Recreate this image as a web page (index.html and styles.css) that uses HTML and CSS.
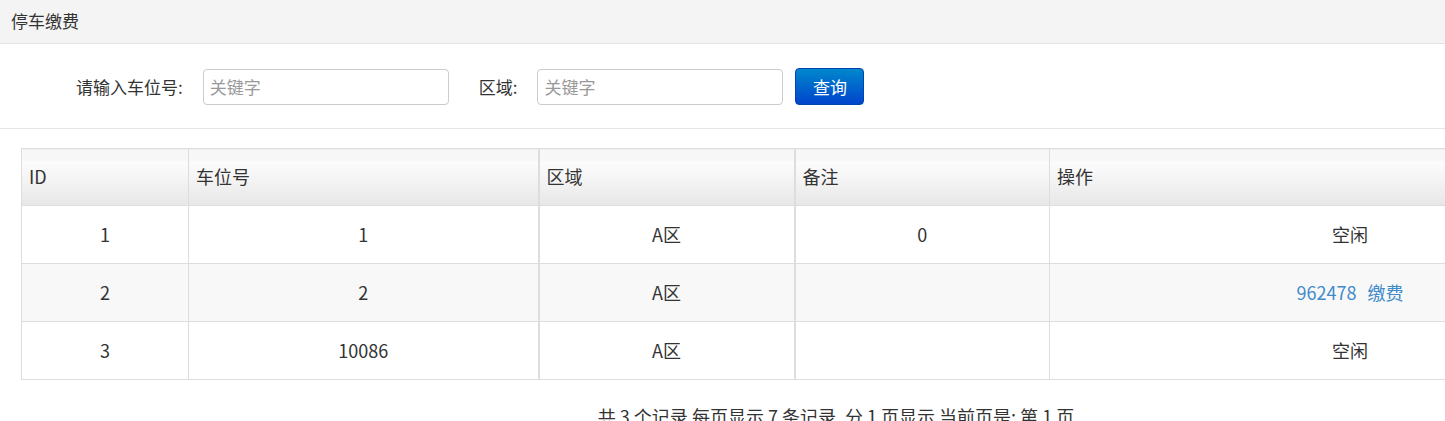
FILE: index.html
```html
<!DOCTYPE html>
<html lang="zh-CN">
<head>
  <meta charset="UTF-8">
  <title>停车缴费</title>
  <link rel="stylesheet" href="styles.css">
</head>
<body>

<div class="title-bar">停车缴费</div>

<!-- Search -->
<form class="search" onsubmit="return false">
  <label class="search-label" for="spot">请输入车位号:</label>
  <input class="search-input" type="text" id="spot" placeholder="关键字">
  <label class="search-label area-label" for="area">区域:</label>
  <input class="search-input" type="text" id="area" placeholder="关键字">
  <button class="btn-query" type="submit">查询</button>
</form>

<div class="page">
  <div class="list">
    <table class="grid">
      <thead>
        <tr>
          <th class="col-id">ID</th>
          <th class="col-no">车位号</th>
          <th class="col-area sep">区域</th>
          <th class="col-note sep">备注</th>
          <th class="col-op">操作</th>
        </tr>
      </thead>
      <tbody>
        <tr>
          <td>1</td>
          <td>1</td>
          <td class="sep">A区</td>
          <td class="sep">0</td>
          <td>空闲</td>
        </tr>
        <tr class="odd">
          <td>2</td>
          <td>2</td>
          <td class="sep">A区</td>
          <td class="sep"></td>
          <td><a href="#">962478</a><a class="pay" href="#">缴费</a></td>
        </tr>
        <tr>
          <td>3</td>
          <td>10086</td>
          <td class="sep">A区</td>
          <td class="sep"></td>
          <td>空闲</td>
        </tr>
      </tbody>
    </table>

    <div class="pager">共 3 个记录 每页显示 7 条记录, 分 1 页显示 当前页是: 第 1 页</div>
  </div>
</div>

</body>
</html>
```

FILE: styles.css
```css
* {
  box-sizing: border-box;
}

html, body {
  overflow: hidden;
}

body {
  margin: 0;
  background: #fff;
  color: #333;
  font-family: "Noto Sans CJK SC", "Liberation Sans", sans-serif;
  font-size: 16px;
}

.title-bar {
  height: 44px;
  line-height: 41px;
  padding-left: 11px;
  font-size: 17px;
  background: #f4f4f4;
  border-bottom: 1px solid #e3e3e3;
}

/* Search row */
.search {
  display: flex;
  align-items: center;
  height: 85px;
  padding-left: 76px;
  border-bottom: 1px solid #e6e6e6;
  margin: 0;
}

.search-label {
  font-size: 17px;
  margin-right: 20px;
}

.area-label {
  margin-left: 30px;
}

.search-input {
  width: 246px;
  height: 36px;
  padding: 0 6px;
  border: 1px solid #ccc;
  border-radius: 4px;
  font-family: inherit;
  font-size: 17px;
  color: #333;
  margin-top: 1px;
}

.search-input::placeholder {
  color: #999;
}

.btn-query {
  margin-left: 12px;
  width: 69px;
  height: 37px;
  border: 1px solid #0044b3;
  border-radius: 4px;
  background: linear-gradient(to bottom, #0088cc, #0044cc);
  color: #fff;
  font-family: inherit;
  font-size: 17px;
  cursor: pointer;
}

/* Table */
.page {
  padding: 19px 0 0 21px;
}

.list {
  width: 1630px;
}

.grid {
  width: 100%;
  border-collapse: collapse;
  font-size: 18px;
}

.grid th,
.grid td {
  height: 57px;
  padding: 0 7px 2px;
  border: 1px solid #ddd;
}

.grid td {
  height: 58px;
  text-align: center;
}

.grid th {
  text-align: left;
  font-weight: normal;
  background: linear-gradient(to bottom, #f7f7f7 0%, #f7f7f7 20%, #fcfcfc 22%, #e7e7e7 100%);
}

.grid .sep {
  border-left: 2px solid #ddd;
}

.grid tr.odd td {
  background: #f8f8f8;
}

.col-id { width: 167px; }
.col-no { width: 350px; }
.col-area { width: 256px; }
.col-note { width: 255px; }

.grid a {
  color: #428bca;
  text-decoration: none;
}

.grid a.pay {
  margin-left: 11px;
}

.pager {
  margin-top: 23px;
  text-align: center;
  font-size: 18px;
}
```
